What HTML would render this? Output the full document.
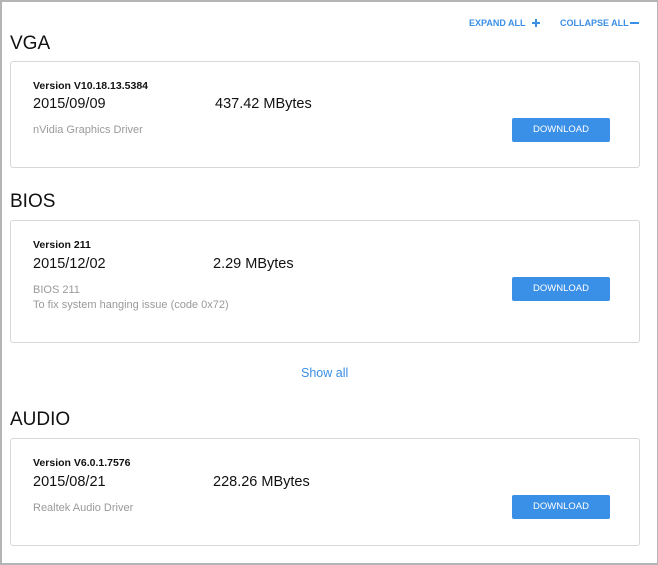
<!DOCTYPE html>
<html><head><style>
*{margin:0;padding:0;box-sizing:border-box}
body{width:658px;height:565px;background:#fff;font-family:"Liberation Sans",sans-serif;position:relative;overflow:hidden}
.frame{position:absolute;left:0;top:0;width:658px;height:565px;border:2px solid #b4b4b4;border-right-width:1px}
.a{position:absolute;white-space:nowrap}
.h{font-size:19px;color:#111;line-height:20px}
.card{position:absolute;left:10px;width:630px;border:1px solid #d8d8d8;border-radius:3px}
.v{font-size:10.5px;font-weight:bold;color:#111;line-height:12px}
.d{font-size:14.5px;color:#111;line-height:16px}
.g{font-size:11px;color:#9a9a9a;line-height:13px}
.btn{position:absolute;left:512px;width:98px;height:24px;background:#3a8fe6;color:#fff;font-size:9.5px;text-align:center;line-height:23px;border-radius:2px}
.lnk{font-size:9px;font-weight:bold;color:#3a8fe6;line-height:12px}
.pm{position:absolute;background:#3a8fe6}
</style></head><body>
<div class="frame"></div>
<div class="a lnk" style="left:469px;top:17px">EXPAND ALL</div>
<div class="pm" style="left:532px;top:22px;width:8px;height:2px"></div>
<div class="pm" style="left:535px;top:19px;width:2px;height:8px"></div>
<div class="a lnk" style="left:560px;top:17px">COLLAPSE ALL</div>
<div class="pm" style="left:630px;top:22px;width:9px;height:2px"></div>

<div class="a h" style="left:10px;top:34px">VGA</div>
<div class="card" style="top:61px;height:107px"></div>
<div class="a v" style="left:33px;top:80px">Version V10.18.13.5384</div>
<div class="a d" style="left:33px;top:96px">2015/09/09</div>
<div class="a d" style="left:215px;top:96px">437.42 MBytes</div>
<div class="a g" style="left:33px;top:124px">nVidia Graphics Driver</div>
<div class="btn" style="top:118px">DOWNLOAD</div>

<div class="a h" style="left:10px;top:192px">BIOS</div>
<div class="card" style="top:220px;height:123px"></div>
<div class="a v" style="left:33px;top:239px">Version 211</div>
<div class="a d" style="left:33px;top:256px">2015/12/02</div>
<div class="a d" style="left:213px;top:256px">2.29 MBytes</div>
<div class="a g" style="left:33px;top:284px">BIOS 211</div>
<div class="a g" style="left:33px;top:299px">To fix system hanging issue (code 0x72)</div>
<div class="btn" style="top:277px">DOWNLOAD</div>

<div class="a" style="left:301px;top:366px;font-size:12.5px;color:#3a8fe6">Show all</div>

<div class="a h" style="left:10px;top:410px">AUDIO</div>
<div class="card" style="top:438px;height:108px"></div>
<div class="a v" style="left:33px;top:457px">Version V6.0.1.7576</div>
<div class="a d" style="left:33px;top:474px">2015/08/21</div>
<div class="a d" style="left:213px;top:474px">228.26 MBytes</div>
<div class="a g" style="left:33px;top:502px">Realtek Audio Driver</div>
<div class="btn" style="top:495px">DOWNLOAD</div>
</body></html>
